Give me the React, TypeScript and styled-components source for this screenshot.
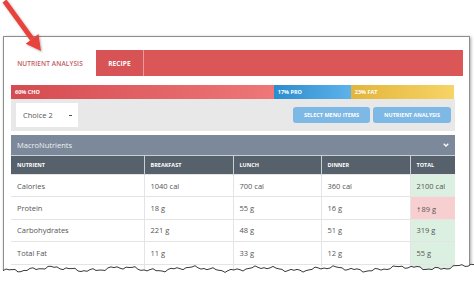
import React from 'react';
import styled, { createGlobalStyle } from 'styled-components';

const GlobalStyle = createGlobalStyle`
  html, body {
    margin: 0;
    padding: 0;
    background: #fff;
  }
  body {
    font-family: 'Open Sans', 'Liberation Sans', sans-serif;
  }
`;

const Page = styled.div`
  position: relative;
  width: 474px;
  height: 282px;
  overflow: hidden;
  padding: 36px 0 0 3px;
  box-sizing: border-box;
`;

const Frame = styled.div`
  width: 467px;
  height: 240px;
  box-sizing: border-box;
  border: 1px solid #8d8d8d;
  box-shadow: 1px 1px 3px rgba(0, 0, 0, 0.35);
  background: #fff;
  padding-top: 13px;
  overflow: hidden;
`;

const TabBar = styled.div`
  display: flex;
  height: 26px;
  margin-right: 6px;
  background: #db5757;
`;

const Tab = styled.div<{ $active?: boolean; $width: number }>`
  width: ${({ $width }) => $width}px;
  display: flex;
  align-items: center;
  justify-content: center;
  font-size: 6.5px;
  font-weight: ${({ $active }) => ($active ? 600 : 700)};
  letter-spacing: 0.1px;
  color: ${({ $active }) => ($active ? '#c25a5f' : '#fff')};
  background: ${({ $active }) => ($active ? '#fff' : '#d85355')};
  border-right: ${({ $active }) => ($active ? 'none' : '1px solid #ee9a9a')};
  box-sizing: border-box;
`;

const Content = styled.div`
  padding: 9px 14px 0 7px;
`;

const MacroBar = styled.div`
  display: flex;
  height: 14px;
  margin-right: 1px;
`;

const Segment = styled.div<{ $grow: number; $from: string; $to: string }>`
  flex: ${({ $grow }) => $grow} 0 0;
  background: linear-gradient(to right, ${({ $from }) => $from}, ${({ $to }) => $to});
  color: #fff;
  font-size: 5.5px;
  font-weight: 700;
  display: flex;
  align-items: center;
  padding-left: 4px;
`;

const Toolbar = styled.div`
  display: flex;
  align-items: center;
  justify-content: space-between;
  height: 32px;
  background: #e8e8e8;
  padding: 0 4px 0 5px;
`;

const Select = styled.div`
  width: 62px;
  height: 24px;
  box-sizing: border-box;
  background: #fff;
  display: flex;
  align-items: center;
  justify-content: space-between;
  padding: 0 6px 0 7px;
  font-size: 7.5px;
  color: #555;
`;

const Caret = styled.span`
  width: 3px;
  height: 1px;
  background: #555;
`;

const ButtonGroup = styled.div`
  display: flex;
  gap: 3px;
`;

const Button = styled.div<{ $width: number }>`
  width: ${({ $width }) => $width}px;
  height: 16px;
  border-radius: 3px;
  background: #7eb8e4;
  color: #fff;
  font-size: 5.5px;
  font-weight: 700;
  display: flex;
  align-items: center;
  justify-content: center;
`;

const PanelHeader = styled.div`
  margin-top: 4px;
  height: 20px;
  background: #7c899a;
  color: #eef1f4;
  font-size: 7.5px;
  display: flex;
  align-items: center;
  justify-content: space-between;
  padding: 0 6px 0 6px;
`;

const Table = styled.table`
  width: 444px;
  border-collapse: collapse;
  table-layout: fixed;
`;

const Col = styled.col<{ $width: number }>`
  width: ${({ $width }) => $width}px;
`;

const Th = styled.th`
  height: 18px;
  padding: 0 6px;
  text-align: left;
  background: #56616c;
  color: #fff;
  font-size: 5.5px;
  font-weight: 700;
  border-left: 1px solid #c9cfd5;
  border-top: 1px solid #c9cfd5;
  &:first-child {
    border-left: none;
  }
`;

const Td = styled.td<{ $tone?: 'good' | 'bad' }>`
  height: 21.4px;
  padding: 0 6px;
  font-size: 7.5px;
  color: #555;
  white-space: nowrap;
  overflow: hidden;
  border-top: 1px solid #e4e4e4;
  border-left: 1px solid #e4e4e4;
  background: ${({ $tone }) =>
    $tone === 'good' ? '#dcf0e1' : $tone === 'bad' ? '#f8cfd0' : '#fff'};
  &:first-child {
    border-left: none;
  }
`;

const Up = styled.span`
  font-weight: 800;
  font-size: 8px;
  color: #2a2a2a;
  margin-right: 1px;
`;

const Overlay = styled.svg`
  position: absolute;
  left: 0;
  pointer-events: none;
`;

const rows: { name: string; cells: string[]; total: string; tone: 'good' | 'bad'; up?: boolean }[] = [
  { name: 'Calories', cells: ['1040 cal', '700 cal', '360 cal'], total: '2100 cal', tone: 'good' },
  { name: 'Protein', cells: ['18 g', '55 g', '16 g'], total: '89 g', tone: 'bad', up: true },
  { name: 'Carbohydrates', cells: ['221 g', '48 g', '51 g'], total: '319 g', tone: 'good' },
  { name: 'Total Fat', cells: ['11 g', '33 g', '12 g'], total: '55 g', tone: 'good' },
  { name: 'Saturated Fat', cells: ['4 g', '33 g', '16 g'], total: '53 g', tone: 'good' },
];

// jagged paper-tear line along the bottom
const tear = (() => {
  const pts: string[] = [];
  for (let x = 0; x <= 474; x += 3) {
    const y =
      269 +
      1.6 * Math.sin(x * 0.09) +
      1.1 * Math.sin(x * 0.31 + 1.3) +
      0.8 * Math.sin(x * 0.73 + 0.4) -
      (x > 380 ? (x - 380) * 0.03 : 0);
    pts.push(`${x},${y.toFixed(1)}`);
  }
  return pts;
})();

export default function App() {
  return (
    <Page>
      <GlobalStyle />
      <Frame>
        <TabBar>
          <Tab $active $width={92}>NUTRIENT ANALYSIS</Tab>
          <Tab $width={48}>RECIPE</Tab>
        </TabBar>
        <Content>
          <MacroBar>
            <Segment $grow={266} $from="#d44b50" $to="#ee7777">60% CHO</Segment>
            <Segment $grow={75} $from="#2c8ccc" $to="#5db2ea">17% PRO</Segment>
            <Segment $grow={102} $from="#e2b53c" $to="#f6d466">23% FAT</Segment>
          </MacroBar>
          <Toolbar>
            <Select>
              Choice 2 <Caret />
            </Select>
            <ButtonGroup>
              <Button $width={77}>SELECT MENU ITEMS</Button>
              <Button $width={78}>NUTRIENT ANALYSIS</Button>
            </ButtonGroup>
          </Toolbar>
          <PanelHeader>
            MacroNutrients
            <svg width="6" height="4" viewBox="0 0 6 4">
              <path d="M0.7 0.7 L3 3 L5.3 0.7" fill="none" stroke="#fff" strokeWidth="1.3" />
            </svg>
          </PanelHeader>
          <Table>
            <colgroup>
              <Col $width={133} />
              <Col $width={89} />
              <Col $width={88} />
              <Col $width={89} />
              <Col $width={45} />
            </colgroup>
            <thead>
              <tr>
                <Th>NUTRIENT</Th>
                <Th>BREAKFAST</Th>
                <Th>LUNCH</Th>
                <Th>DINNER</Th>
                <Th>TOTAL</Th>
              </tr>
            </thead>
            <tbody>
              {rows.map((r) => (
                <tr key={r.name}>
                  <Td>{r.name}</Td>
                  {r.cells.map((c, i) => (
                    <Td key={i}>{c}</Td>
                  ))}
                  <Td $tone={r.tone}>
                    {r.up && <Up>↑</Up>}
                    {r.total}
                  </Td>
                </tr>
              ))}
            </tbody>
          </Table>
        </Content>
      </Frame>

      <Overlay width={474} height={282} viewBox="0 0 474 282" style={{ top: 0 }}>
        <polygon points={`0,282 ${tear.join(' ')} 474,282`} fill="#fff" />
        <polyline points={tear.slice(1).join(' ')} fill="none" stroke="#3a3a3a" strokeWidth="1" />
      </Overlay>

      <Overlay width={60} height={60} viewBox="0 0 60 60" style={{ top: 0 }}>
        <defs>
          <filter id="arrowShadow" x="-20%" y="-20%" width="140%" height="140%">
            <feDropShadow dx="1" dy="1" stdDeviation="0.8" floodColor="#000" floodOpacity="0.3" />
          </filter>
        </defs>
        <g filter="url(#arrowShadow)" fill="#e8423d">
          <path d="M2.5 2.6 L6.5 -0.4 L34.1 37.4 L30.1 40.4 Z" />
          <polygon points="41,51 25.7,43.7 38.5,34.1" />
        </g>
      </Overlay>
    </Page>
  );
}
